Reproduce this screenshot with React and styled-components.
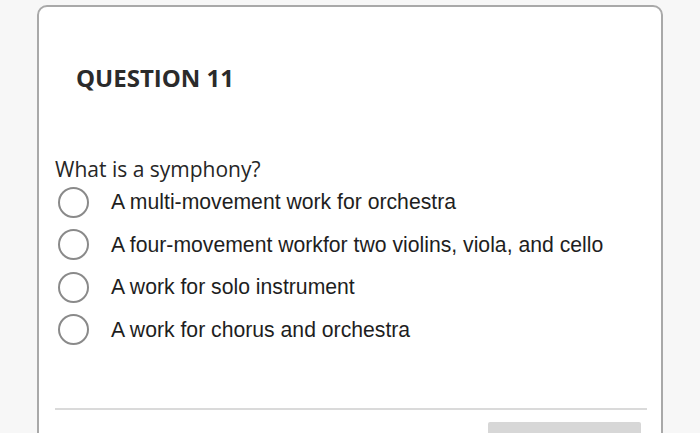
import React from 'react'
import styled, { createGlobalStyle } from 'styled-components'

const GlobalStyle = createGlobalStyle`
  html, body {
    margin: 0;
    padding: 0;
    background: #f7f7f7;
    overflow: hidden;
  }
`

const Page = styled.div`
  height: 433px;
  overflow: hidden;
  padding: 5px 0 0 37px;
  box-sizing: border-box;
`

const Card = styled.div`
  width: 626px;
  height: 460px;
  box-sizing: border-box;
  background: #fff;
  border: 2px solid #a9a9a9;
  border-radius: 10px;
  padding: 54px 14px 0 16px;
`

const Title = styled.h2`
  margin: 0 0 0 21px;
  font-family: "Open Sans", sans-serif;
  font-weight: 700;
  font-size: 24px;
  line-height: 34px;
  color: #2b2b2b;
`

const Prompt = styled.div`
  margin: 60px 0 0 0;
  font-family: "Open Sans", sans-serif;
  font-size: 21px;
  line-height: 28px;
  color: #262626;
`

const Options = styled.ul`
  list-style: none;
  margin: -2px 0 0 0;
  padding: 0;
`

const Option = styled.li`
  display: flex;
  align-items: center;
  height: 42.5px;
  gap: 22px;
  padding-left: 3px;
`

const Radio = styled.span`
  width: 31px;
  height: 31px;
  box-sizing: border-box;
  border: 2.5px solid #8a8a8a;
  border-radius: 50%;
  flex: none;
`

const Label = styled.span`
  font-family: "Liberation Sans", Arial, sans-serif;
  font-size: 21.2px;
  color: #1e1e1e;
`

const Divider = styled.hr`
  margin: 57px 0 0 0;
  border: none;
  border-top: 2px solid #dadada;
`

const Footer = styled.div`
  display: flex;
  justify-content: flex-end;
  padding: 12px 6px 0 0;
`

const SaveButton = styled.div`
  width: 153px;
  height: 30px;
  background: #d7d7d7;
  border-radius: 2px;
`

const answers = [
  'A multi-movement work for orchestra',
  'A four-movement workfor two violins, viola, and cello',
  'A work for solo instrument',
  'A work for chorus and orchestra',
]

export default function App() {
  return (
    <>
      <GlobalStyle />
      <Page>
        <Card>
          <Title>QUESTION 11</Title>
          <Prompt>What is a symphony?</Prompt>
          <Options>
            {answers.map((a) => (
              <Option key={a}>
                <Radio />
                <Label>{a}</Label>
              </Option>
            ))}
          </Options>
          <Divider />
          <Footer>
            <SaveButton />
          </Footer>
        </Card>
      </Page>
    </>
  )
}
